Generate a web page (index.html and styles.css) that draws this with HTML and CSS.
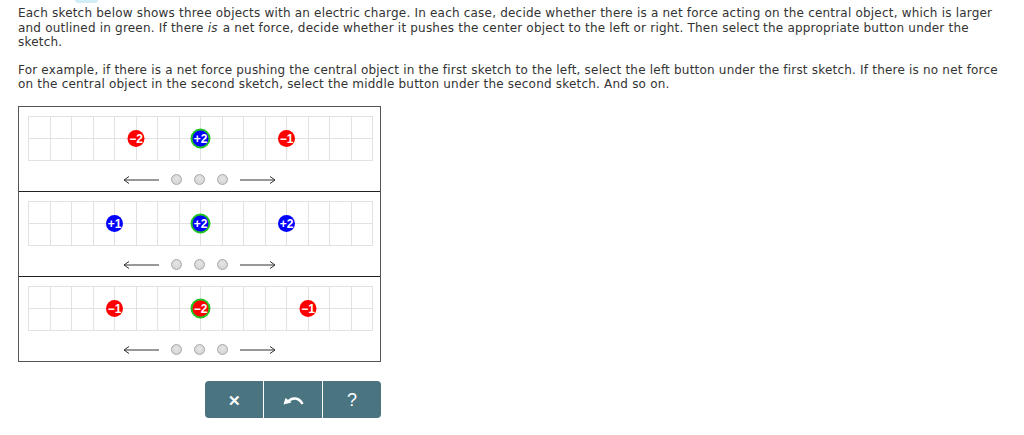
FILE: index.html
```html
<!DOCTYPE html>
<html>
<head>
<meta charset="utf-8">
<link rel="stylesheet" href="styles.css">
</head>
<body>
<div class="tab"></div>
<div class="content">
  <p class="para">Each sketch below shows three objects with an electric charge. In each case, decide whether there is a net force acting on the central object, which is larger and outlined in green. If there <i class="em">is</i> a net force, decide whether it pushes the center object to the left or right. Then select the appropriate button under the sketch.</p>
  <p class="para">For example, if there is a net force pushing the central object in the first sketch to the left, select the left button under the first sketch. If there is no net force on the central object in the second sketch, select the middle button under the second sketch. And so on.</p>

  <div class="sketches">
    <div class="panel">
      <svg class="grid" width="345" height="45" viewBox="0 0 345 45">
        <g class="lines">
          <path d="M0.5 0.5H344.5M0.5 22.5H344.5M0.5 44.5H344.5M0.5 0V45M22.5 0V45M43.5 0V45M65.5 0V45M86.5 0V45M108.5 0V45M129.5 0V45M151.5 0V45M172.5 0V45M194.5 0V45M215.5 0V45M237.5 0V45M258.5 0V45M280.5 0V45M301.5 0V45M323.5 0V45M344.5 0V45"/>
        </g>
        <circle class="neg" cx="108" cy="22.5" r="8.5"/><text class="q" x="108" y="23">−2</text>
        <circle class="pos ring" cx="172.5" cy="22.5" r="9"/><text class="q" x="172.5" y="23">+2</text>
        <circle class="neg" cx="258.5" cy="22.5" r="8.5"/><text class="q" x="258.5" y="23">−1</text>
      </svg>
      <div class="controls">
        <svg class="arrow" width="37" height="10" viewBox="0 0 37 10"><path d="M1 5H36M1 5L6 1.5M1 5L6 8.5"/></svg>
        <span class="radio"></span><span class="radio"></span><span class="radio"></span>
        <svg class="arrow" width="37" height="10" viewBox="0 0 37 10"><path d="M1 5H36M36 5L31 1.5M36 5L31 8.5"/></svg>
      </div>
    </div>
    <div class="panel">
      <svg class="grid" width="345" height="45" viewBox="0 0 345 45">
        <g class="lines">
          <path d="M0.5 0.5H344.5M0.5 22.5H344.5M0.5 44.5H344.5M0.5 0V45M22.5 0V45M43.5 0V45M65.5 0V45M86.5 0V45M108.5 0V45M129.5 0V45M151.5 0V45M172.5 0V45M194.5 0V45M215.5 0V45M237.5 0V45M258.5 0V45M280.5 0V45M301.5 0V45M323.5 0V45M344.5 0V45"/>
        </g>
        <circle class="pos" cx="86.5" cy="22.5" r="8.5"/><text class="q" x="86.5" y="23">+1</text>
        <circle class="pos ring" cx="172.5" cy="22.5" r="9"/><text class="q" x="172.5" y="23">+2</text>
        <circle class="pos" cx="258.5" cy="22.5" r="8.5"/><text class="q" x="258.5" y="23">+2</text>
      </svg>
      <div class="controls">
        <svg class="arrow" width="37" height="10" viewBox="0 0 37 10"><path d="M1 5H36M1 5L6 1.5M1 5L6 8.5"/></svg>
        <span class="radio"></span><span class="radio"></span><span class="radio"></span>
        <svg class="arrow" width="37" height="10" viewBox="0 0 37 10"><path d="M1 5H36M36 5L31 1.5M36 5L31 8.5"/></svg>
      </div>
    </div>
    <div class="panel">
      <svg class="grid" width="345" height="45" viewBox="0 0 345 45">
        <g class="lines">
          <path d="M0.5 0.5H344.5M0.5 22.5H344.5M0.5 44.5H344.5M0.5 0V45M22.5 0V45M43.5 0V45M65.5 0V45M86.5 0V45M108.5 0V45M129.5 0V45M151.5 0V45M172.5 0V45M194.5 0V45M215.5 0V45M237.5 0V45M258.5 0V45M280.5 0V45M301.5 0V45M323.5 0V45M344.5 0V45"/>
        </g>
        <circle class="neg" cx="86.5" cy="22.5" r="8.5"/><text class="q" x="86.5" y="23">−1</text>
        <circle class="neg ring" cx="172.5" cy="22.5" r="9"/><text class="q" x="172.5" y="23">−2</text>
        <circle class="neg" cx="280" cy="22.5" r="8.5"/><text class="q" x="280" y="23">−1</text>
      </svg>
      <div class="controls">
        <svg class="arrow" width="37" height="10" viewBox="0 0 37 10"><path d="M1 5H36M1 5L6 1.5M1 5L6 8.5"/></svg>
        <span class="radio"></span><span class="radio"></span><span class="radio"></span>
        <svg class="arrow" width="37" height="10" viewBox="0 0 37 10"><path d="M1 5H36M36 5L31 1.5M36 5L31 8.5"/></svg>
      </div>
    </div>
  </div>

  <div class="toolbar">
    <div class="btngroup">
      <button class="btn btn-x" type="button">✕</button>
      <button class="btn" type="button">
        <svg width="21" height="9" viewBox="0 0 21 9"><path class="undo-arc" d="M5 6C8.5 1 16 1 19.5 8"/><path class="undo-head" d="M0.5 8.5L2.5 2L8.5 6.5Z"/></svg>
      </button>
      <button class="btn btn-q" type="button">?</button>
    </div>
  </div>
</div>
</body>
</html>
```

FILE: styles.css
```css
html, body {
  margin: 0;
  padding: 0;
  background: #fff;
}

body {
  font-family: "DejaVu Sans", Verdana, sans-serif;
  font-size: 12px;
  letter-spacing: 0.2px;
  color: #333;
}

.tab {
  width: 23px;
  height: 3px;
  margin-left: 75px;
  background: #d3edf6;
  border-radius: 0 0 4px 4px;
}

.content {
  padding: 0 18px;
}

.para {
  margin: 3px 0 13px;
  line-height: 14.5px;
}

.para + .para {
  margin-top: 0;
  margin-bottom: 14px;
}

.em {
  padding-right: 1px;
}

.sketches {
  width: 361px;
  border: 1px solid #555;
  letter-spacing: 0;
}

.panel {
  display: flex;
  flex-direction: column;
  padding: 9px 0 5px 9px;
  height: 84px;
  box-sizing: border-box;
}

.panel + .panel {
  border-top: 1px solid #222;
  height: 85px;
}

.grid {
  display: block;
}

.lines path {
  stroke: #e2e2e2;
  stroke-width: 1;
  fill: none;
  shape-rendering: crispEdges;
}

.neg { fill: #f00; }
.pos { fill: #00f; }
.ring { stroke: #22c422; stroke-width: 2; }

.q {
  fill: #fff;
  font-family: "Liberation Sans", Arial, sans-serif;
  font-weight: bold;
  font-size: 12px;
  text-anchor: middle;
  dominant-baseline: central;
}

.controls {
  margin-top: 13px;
  margin-left: -9px;
  height: 12px;
  display: flex;
  align-items: center;
  justify-content: center;
  padding-left: 0;
}

.arrow path {
  stroke: #333;
  stroke-width: 1;
  fill: none;
}

.arrow:first-child { margin-right: 5px; }
.arrow:last-child { margin-left: 5px; }

.radio {
  width: 11px;
  height: 11px;
  border-radius: 50%;
  box-sizing: border-box;
  border: 1px solid #a9a9a9;
  background: radial-gradient(circle at 50% 40%, #e6e6e6, #cfcfcf);
  margin: 0 6px;
}

.toolbar {
  width: 363px;
  display: flex;
  justify-content: flex-end;
  margin-top: 19px;
  letter-spacing: 0;
}

.btngroup {
  display: flex;
  border-radius: 4px;
  overflow: hidden;
}

.btn {
  width: 58px;
  height: 37px;
  border: 0;
  margin: 0;
  padding: 0;
  background: #4a7580;
  color: #fff;
  display: flex;
  align-items: center;
  justify-content: center;
  font-family: "Liberation Sans", Arial, sans-serif;
}

.btn + .btn {
  border-left: 1px solid #fff;
  width: 59px;
}

.btn-x {
  font-size: 15px;
  font-weight: bold;
  padding-top: 4px;
}

.btn-q {
  font-size: 18px;
  padding-top: 3px;
}

.btn svg {
  margin-top: 3px;
}

.undo-arc {
  fill: none;
  stroke: #fff;
  stroke-width: 2.6;
}

.undo-head {
  fill: #fff;
}
```
